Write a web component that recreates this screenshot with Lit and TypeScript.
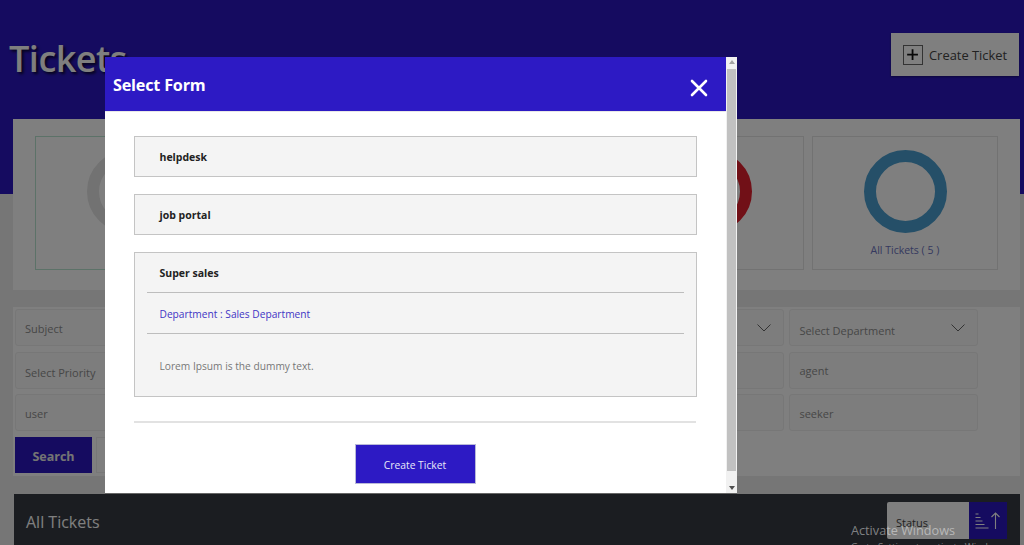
import { LitElement, html, css } from "lit";
import { customElement } from "lit/decorators.js";

@customElement("app-root")
export class AppRoot extends LitElement {
  static styles = css`
    :host { display: block; width: 1024px; height: 545px; overflow: hidden; position: relative; font-family: "Open Sans", "Noto Sans", sans-serif; background: #ececec; }
    * { box-sizing: border-box; }
    .hero { height: 194px; background: #2a17c0; display: flex; justify-content: space-between; align-items: flex-start; padding: 33px 5px 0 9px; }
    .hero h1 { margin: 4px 0 0; font-size: 36px; line-height: 44px; font-weight: 600; letter-spacing: -0.5px; color: #fff; text-shadow: 2px 2px 3px rgba(0,0,0,.75); }
    .create { width: 128px; height: 43px; background: #fff; display: flex; align-items: center; gap: 6px; padding-left: 12px; font-size: 12.9px; color: #444; box-shadow: 0 1px 2px rgba(0,0,0,.4); }
    .create .plus { width: 20px; height: 20px; border: 1px solid #666; display: block; }
    .content { margin-top: -75px; padding: 0 4px 0 13px; }
    .stats { background: #fff; height: 171px; padding: 17px 22px; display: flex; gap: 8px; }
    .stat { flex: 1; height: 134px; border: 1px solid #e4e4e4; display: flex; flex-direction: column; align-items: center; padding-top: 13px; }
    .stat.green { border-color: #b8e4d0; }
    .ring { width: 83px; height: 83px; border-radius: 50%; border: 12px solid #e4e4e4; }
    .ring.red { border-color: #e3202f; }
    .ring.blue { border-color: #4a9fd0; border-width: 12.5px; margin-left: 1px; }
    .stat span { margin-top: 10px; font-size: 10.5px; color: #6b73c0; }
    .filters { margin-top: 17px; background: #fff; height: 169px; padding: 2px 42px 0 2px; }
    .grid { display: grid; grid-template-columns: repeat(5, 1fr); gap: 5.500px 5px; }
    .field { height: 37px; background: #fbfbfb; border: 1px solid #eee; border-radius: 3px; display: flex; align-items: center; justify-content: space-between; padding: 1.500px 12px 0 9px; font-size: 11px; color: #8e8e8e; }
    .field svg { display: block; margin-top: -1.500px; }
    .sel { margin-top: 3.500px; }
    .actions { display: flex; gap: 4px; margin-top: 6px; }
    .search { width: 77px; height: 36px; background: #2a17c0; color: #e8e8e8; font-size: 12.5px; font-weight: 700; display: flex; align-items: center; justify-content: center; padding-top: 2px; }
    .reset { width: 77px; height: 36px; border: 1px solid #eee; }
    .table { margin-top: 18px; margin-left: 1px; height: 60px; background: #363a42; display: flex; align-items: flex-start; justify-content: space-between; padding: 8px 13px 0 12px; }
    .table h2 { margin: 8px 0 0; font-size: 16px; line-height: 24px; font-weight: 400; color: #fff; }
    .sort { display: flex; }
    .status { width: 82px; height: 37px; background: #fff; border-radius: 2px 0 0 2px; padding: 13px 0 0 9px; font-size: 11px; color: #444; }
    .sort-btn { width: 38px; height: 37px; background: #2a17c0; }
    .sort-btn svg { display: block; }
    .overlay { position: absolute; inset: 0; background: rgba(0,0,0,.5); }
    .modal { position: absolute; left: 105px; top: 57px; width: 632px; height: 435.5px; background: #fff; display: flex; box-shadow: 0 1px 0 #666; }
    .main { flex: 1; display: flex; flex-direction: column; min-width: 0; }
    .head { height: 55px; background: #2d1ac4; display: flex; align-items: center; justify-content: space-between; padding: 0 18px 0 8px; border-bottom: 1px solid #e8e8e8; color: #fff; }
    .head h3 { margin: 1px 0 0; font-size: 16.200px; font-weight: 700; letter-spacing: -.2px; }
    .head svg { display: block; margin-top: 7px; }
    .body { padding: 24px 29.500px 0 29px; display: flex; flex-direction: column; gap: 17px; }
    .form { background: #f4f4f4; border: 1px solid #c4c4c4; border-left-width: 1.5px; border-top-width: 1.5px; }
    .form .t { height: 39px; padding: 1.500px 0 0 24.500px; display: flex; align-items: center; font-size: 10.5px; font-weight: 700; color: #222; }
    .form.open { height: 145px; padding: 0 12px; }
    .form.open .t { padding: 0 0 0 12.500px; height: 39px; }
    .form hr { margin: 0; border: 0; border-top: 1px solid #bdbdbd; }
    .dept { height: 40px; padding: 1px 0 0 12.500px; display: flex; align-items: center; font-size: 10.2px; color: #3f34c4; }
    .lorem { padding: 24px 0 0 12.500px; font-size: 10.2px; line-height: 16px; color: #777; }
    .foot { margin: 24px 30px 0 29px; border-top: 2px solid #e2e2e2; display: flex; justify-content: center; padding-top: 21px; }
    .go { width: 121px; height: 40px; background: #2d1ac4; color: #e8e8f8; display: flex; align-items: center; justify-content: center; padding-top: 2px; font-size: 10.3px; border: 1px solid #b9b9d8; }
    .bar { width: 11px; background: #f1f1f1; display: flex; flex-direction: column; align-items: center; padding: 3px 0; }
    .thumb { flex: 1; width: 9px; background: #c1c1c1; margin: 5px 0 15px; }
    .up { border: 3px solid transparent; border-top: 0; border-bottom: 4px solid #a3a3a3; }
    .down { border: 3px solid transparent; border-bottom: 0; border-top: 4px solid #505050; }
    .mark { position: absolute; left: 851px; top: 521px; color: rgba(255,255,255,.45); font-size: 12.700px; line-height: 19px; white-space: nowrap; }
    .mark small { display: block; font-size: 9.600px; line-height: 14px; }
  `;

  private chev() {
    return html`<svg width="14" height="8" viewBox="0 0 14 8" fill="none" stroke="#666" stroke-width="1"><path d="M.5.5L7 7l6.500-6.500"/></svg>`;
  }

  render() {
    return html`
      <div class="hero">
        <h1>Tickets</h1>
        <div class="create">
          <svg class="plus" viewBox="0 0 20 20" stroke="#111" stroke-width="2"><path d="M9.500 3.500v12M3.500 9.500h12"/></svg>
          Create Ticket
        </div>
      </div>
      <div class="content">
        <div class="stats">
          <div class="stat green"><div class="ring"></div></div>
          <div class="stat"></div>
          <div class="stat"></div>
          <div class="stat"><div class="ring red"></div></div>
          <div class="stat"><div class="ring blue"></div><span>All Tickets ( 5 )</span></div>
        </div>
        <div class="filters">
          <div class="grid">
            <div class="field">Subject</div><div class="field"></div><div class="field"></div>
            <div class="field"><span></span>${this.chev()}</div>
            <div class="field"><span class="sel">Select Department</span>${this.chev()}</div>
            <div class="field"><span class="sel">Select Priority</span></div><div class="field"></div><div class="field"></div><div class="field"></div>
            <div class="field">agent</div>
            <div class="field">user</div><div class="field"></div><div class="field"></div><div class="field"></div>
            <div class="field">seeker</div>
          </div>
          <div class="actions"><div class="search">Search</div><div class="reset"></div></div>
        </div>
        <div class="table">
          <h2>All Tickets</h2>
          <div class="sort">
            <div class="status">Status</div>
            <div class="sort-btn">
              <svg width="38" height="37" viewBox="0 0 38 37" fill="none" stroke="#fff" stroke-width="1.100"><path d="M6.500 12h3M6.500 15.500h5M6.500 19h7M6.500 22.500h9M6.500 26h13M26.500 27V11M22.500 15l4-4 4 4"/></svg>
            </div>
          </div>
        </div>
      </div>
      <div class="overlay"></div>
      <div class="modal">
        <div class="main">
          <div class="head">
            <h3>Select Form</h3>
            <svg width="18" height="18" viewBox="0 0 18 18" stroke="#fff" stroke-width="2.600" stroke-linecap="round"><path d="M2 2l14 14M16 2L2 16"/></svg>
          </div>
          <div class="body">
            <div class="form"><div class="t">helpdesk</div></div>
            <div class="form"><div class="t">job portal</div></div>
            <div class="form open">
              <div class="t">Super sales</div>
              <hr />
              <div class="dept">Department : Sales Department</div>
              <hr />
              <div class="lorem">Lorem Ipsum is the dummy text.</div>
            </div>
          </div>
          <div class="foot"><div class="go">Create Ticket</div></div>
        </div>
        <div class="bar"><div class="up"></div><div class="thumb"></div><div class="down"></div></div>
      </div>
      <div class="mark">Activate Windows<small>Go to Settings to activate Windows.</small></div>
    `;
  }
}
